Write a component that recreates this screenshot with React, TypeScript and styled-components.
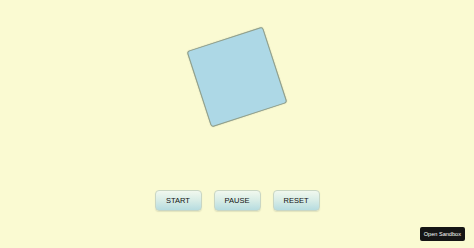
import React from 'react';
import styled, { createGlobalStyle } from 'styled-components';

const GlobalStyle = createGlobalStyle`
  html, body {
    margin: 0;
    padding: 0;
    height: 100%;
    background-color: #fafad2;
    font-family: 'Liberation Sans', Arial, sans-serif;
  }
  #root {
    height: 100%;
  }
`;

const Page = styled.div`
  height: 100vh;
  display: flex;
  flex-direction: column;
  align-items: center;
  position: relative;
`;

const Stage = styled.div`
  height: 153px;
  width: 100%;
  display: flex;
  align-items: center;
  justify-content: center;
`;

const Square = styled.div<{ angle: number }>`
  width: 78px;
  height: 78px;
  background-color: #add8e6;
  border: 1px solid #8f9f8c;
  border-radius: 3px;
  box-shadow: 0 0 1px rgb(90 100 80 / 50%);
  transform: rotate(${(p) => p.angle}deg);
`;

const Controls = styled.div`
  margin-top: 37px;
  display: flex;
  gap: 12px;
`;

const ControlButton = styled.button`
  width: 47px;
  height: 21px;
  padding: 0;
  font-family: 'Liberation Sans', Arial, sans-serif;
  font-size: 7.5px;
  color: #111;
  border: 1px solid #c9d6c4;
  border-radius: 4px;
  background: linear-gradient(to bottom, #f1f8ee 0%, #d7ece6 50%, #b6dce0 100%);
  box-shadow: 0 1px 1px rgb(150 160 130 / 25%);
  cursor: pointer;
`;

const SandboxLink = styled.a`
  position: absolute;
  right: 9px;
  bottom: 7px;
  background: #151515;
  color: #fff;
  font-size: 5.6px;
  line-height: 8px;
  padding: 3px 4px;
  border-radius: 2px;
  border: 0;
  text-decoration: none;
`;

function App(): JSX.Element {
  return (
    <>
      <GlobalStyle />
      <Page>
        <Stage>
          <Square angle={-18} />
        </Stage>
        <Controls>
          <ControlButton>START</ControlButton>
          <ControlButton>PAUSE</ControlButton>
          <ControlButton>RESET</ControlButton>
        </Controls>
        <SandboxLink href="#">Open Sandbox</SandboxLink>
      </Page>
    </>
  );
}

export default App;
